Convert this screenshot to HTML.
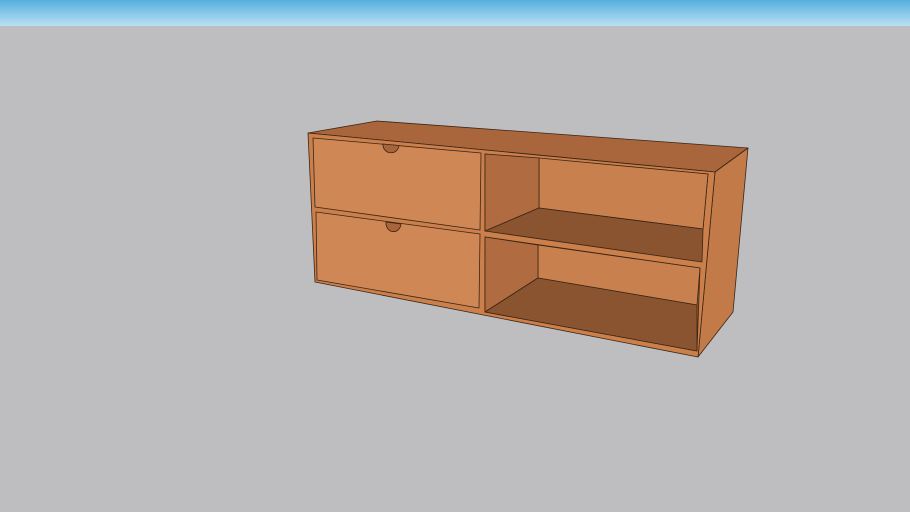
<!DOCTYPE html>
<html><head><style>
html,body{margin:0;padding:0;width:910px;height:512px;overflow:hidden;background:#bebec1}
</style></head><body>
<svg width="910" height="512" viewBox="0 0 910 512" xmlns="http://www.w3.org/2000/svg">
<defs>
<linearGradient id="sky" x1="0" y1="0" x2="0" y2="1">
<stop offset="0" stop-color="#55afdd"/><stop offset="1" stop-color="#b9e1f3"/>
</linearGradient>
</defs>
<rect x="0" y="0" width="910" height="26" fill="url(#sky)"/>
<rect x="0" y="26" width="910" height="486" fill="#bebec1"/>
<g stroke="#3a2514" stroke-width="0.8" stroke-linejoin="round">
<polygon points="308,133 377,121 748,148 715,172" fill="#a9653b"/>
<polygon points="715,172 748,148 733,312 698,357" fill="#c27a48"/>
<polygon points="308,133 715,172 698,357 315,282" fill="#cb7f4b"/>
<polygon points="485,154 708,174 703,229 485,231" fill="#a9653a"/>
<polygon points="539,158 708,174 703,229 539,208" fill="#c9804f"/>
<polygon points="485,154 539,158 539,208 485,231" fill="#b06c40"/>
<polygon points="539,208 703,229 702,262 485,231" fill="#8a5431"/>
<polygon points="485,237 700,268 697,351 485,312" fill="#a9653a"/>
<polygon points="538,245 700,268 697,305 538,278" fill="#c9804f"/>
<polygon points="485,237 538,245 538,278 485,312" fill="#b06c40"/>
<polygon points="538,278 697,305 697,351 485,312" fill="#8a5431"/>
<polygon points="313,138 481,153 480,230 315,207" fill="#cf8756"/>
<polygon points="316,212 480,234 479,308 317,280" fill="#cf8756"/>
<path d="M383,144 A8,8 0 0 0 399,145.5 Z" fill="#a8643a"/>
<path d="M386,222 A7,8 0 0 0 401,224 Z" fill="#a8643a"/>
</g>
</svg>
</body></html>
